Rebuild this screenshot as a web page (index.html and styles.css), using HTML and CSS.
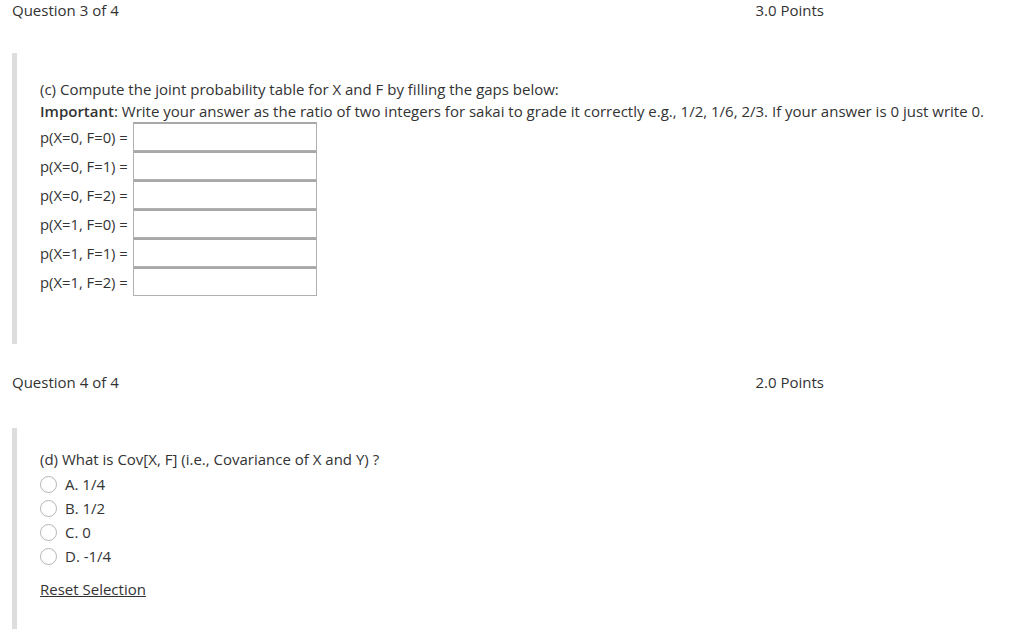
FILE: index.html
```html
<!DOCTYPE html>
<html>
<head>
<meta charset="utf-8">
<link rel="stylesheet" href="styles.css">
</head>
<body>
<div class="question">
  <div class="q-head">
    <span class="q-title">Question 3 of 4</span>
    <span class="q-points">3.0 Points</span>
  </div>
  <div class="q-body q-body-c">
    <p class="q-text">(c) Compute the joint probability table for X and F by filling the gaps below:</p>
    <p class="q-text"><strong>Important</strong>: Write your answer as the ratio of two integers for sakai to grade it correctly e.g., 1/2, 1/6, 2/3. If your answer is 0 just write 0.</p>
    <div class="gaps">
      <div class="gap-row"><span class="gap-label">p(X=0, F=0) =</span><input class="gap-input" type="text"></div>
      <div class="gap-row"><span class="gap-label">p(X=0, F=1) =</span><input class="gap-input" type="text"></div>
      <div class="gap-row"><span class="gap-label">p(X=0, F=2) =</span><input class="gap-input" type="text"></div>
      <div class="gap-row"><span class="gap-label">p(X=1, F=0) =</span><input class="gap-input" type="text"></div>
      <div class="gap-row"><span class="gap-label">p(X=1, F=1) =</span><input class="gap-input" type="text"></div>
      <div class="gap-row"><span class="gap-label">p(X=1, F=2) =</span><input class="gap-input" type="text"></div>
    </div>
  </div>
</div>
<div class="question question-2">
  <div class="q-head">
    <span class="q-title">Question 4 of 4</span>
    <span class="q-points">2.0 Points</span>
  </div>
  <div class="q-body q-body-d">
    <p class="q-text">(d) What is Cov[X, F] (i.e., Covariance of X and Y) ?</p>
    <ul class="choices">
      <li class="choice"><span class="radio"></span><span>A. 1/4</span></li>
      <li class="choice"><span class="radio"></span><span>B. 1/2</span></li>
      <li class="choice"><span class="radio"></span><span>C. 0</span></li>
      <li class="choice"><span class="radio"></span><span>D. -1/4</span></li>
    </ul>
    <a class="reset" href="#">Reset Selection</a>
  </div>
</div>
</body>
</html>
```

FILE: styles.css
```css
html, body {
  margin: 0;
  padding: 0;
  background: #fff;
}
body {
  font-family: "Open Sans", "Liberation Sans", sans-serif;
  color: #333;
  font-size: 15px;
  line-height: 20px;
}
.question {
  padding-left: 12px;
}
.q-head {
  width: 812px;
  display: flex;
  justify-content: space-between;
  height: 21px;
}
.q-body {
  border-left: 5px solid #dddddd;
  padding-left: 23px;
}
.q-body-c {
  margin-top: 32px;
  padding-top: 25px;
  padding-bottom: 48px;
}
.question-2 {
  margin-top: 28px;
}
.q-body-d {
  margin-top: 35px;
  padding-top: 20px;
  padding-bottom: 30px;
}
.q-text {
  margin: 0;
  line-height: 22px;
}
.q-text strong {
  font-weight: 600;
}
.gaps {
  margin-top: 0;
  display: flex;
  flex-direction: column;
}
.gap-row {
  display: flex;
  align-items: center;
  height: 29px;
}
.gap-label {
  font-size: 14.8px;
  width: 93px;
}
.gap-input {
  box-sizing: border-box;
  width: 184px;
  height: 29px;
  margin: 0;
  border: 1px solid #b0b0b0;
  border-top: 2px solid #a8a8a8;
  background: #fff;
  padding: 0 4px;
  font: inherit;
}
.choices {
  list-style: none;
  margin: 2px 0 0;
  padding: 0;
}
.choice {
  display: flex;
  align-items: center;
  height: 24px;
}
.radio {
  box-sizing: border-box;
  width: 17px;
  height: 17px;
  border: 1px solid #b5b5b5;
  border-radius: 50%;
  margin-right: 8px;
}
.reset {
  display: inline-block;
  margin-top: 11px;
  color: #333;
  text-decoration: underline;
}
```
